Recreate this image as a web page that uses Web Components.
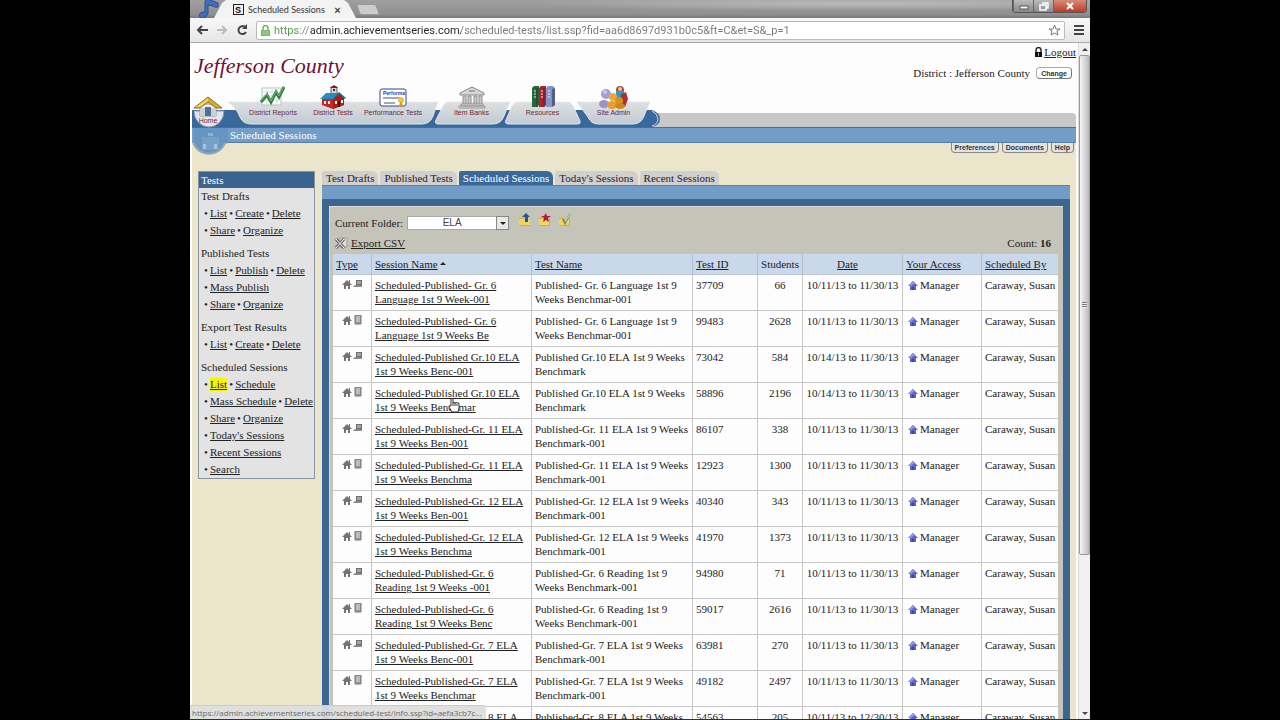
<!DOCTYPE html>
<html lang="en">
<head>
<meta charset="utf-8">
<title>Scheduled Sessions</title>
<style>
html,body{margin:0;height:100%;background:#000;overflow:hidden}
body{font:11px/14px "Liberation Serif",serif;color:#222}
</style>
</head>
<body>
<browser-window>
  <browser-tabs slot="tabs" label="Scheduled Sessions"></browser-tabs>
  <browser-toolbar slot="toolbar"></browser-toolbar>
  <site-header></site-header>
  <main-nav label="Scheduled Sessions"></main-nav>
  <page-body>
    <side-menu slot="side" label="Tests">
      <menu-group label="Test Drafts" items="List,Create,Delete|Share,Organize"></menu-group>
      <menu-group label="Published Tests" items="List,Publish,Delete|Mass Publish|Share,Organize"></menu-group>
      <menu-group label="Export Test Results" items="List,Create,Delete"></menu-group>
      <menu-group label="Scheduled Sessions" current="List" items="List,Schedule|Mass Schedule,Delete|Share,Organize|Today's Sessions|Recent Sessions|Search"></menu-group>
    </side-menu>
    <section-tabs items="Test Drafts|Published Tests|Scheduled Sessions|Today's Sessions|Recent Sessions" current="Scheduled Sessions"></section-tabs>
    <session-panel>
      <folder-bar></folder-bar>
      <session-table></session-table>
    </session-panel>
  </page-body>
  <status-bubble slot="over">https://admin.achievementseries.com/scheduled-test/info.ssp?id=aefa3cb7c...</status-bubble>
  <mouse-pointer slot="over"></mouse-pointer>
</browser-window>
<script>
const icons = {
  home: [30,22,`<path d="M7 9h16v12H7z" fill="#eef1f4" stroke="#8b95a0"/><path d="M7 13h5v8H7zM18 13h5v8h-5z" fill="#c8d1da"/><path d="M12 12h6v9h-6z" fill="#52708f"/><path d="M15 2 1 13h6l8-6 8 6h6z" fill="#d6ac2c" stroke="#8b7020"/><path d="M15 3 3 12h4l8-6z" fill="#efd469"/>`],
  chart: [26,24,`<path d="M2 3h19v17H2z" fill="#fff" stroke="#b9bfc3"/><path d="M2 7h19M2 11h19M2 15h19M7 3v17M12 3v17M17 3v17" stroke="#d4d9dc"/><path d="m1 17 6-7 4 7 5-10 3 5 5-10" fill="none" stroke="#2e7c3c" stroke-width="3"/><path d="m1 16 6-7 4 7 5-10 3 5 5-10" fill="none" stroke="#79ba7d"/>`],
  school: [26,24,`<path d="M11 2h6v8h-6z" fill="#d9d1cc" stroke="#795c58"/><path d="m10 3 4-3 4 3z" fill="#6d2422"/><path d="M13 4h2v2h-2z" fill="#433"/><path d="M2 13h11l6-5 5 5v7l-11 4-11-4z" fill="#c6241f"/><path d="m13 14 6-5 5 4v7l-11 4z" fill="#a81c1a"/><path d="M0 14 6 8h13l-6 6z" fill="#248fbe"/><path d="m19 7 7 6-1 1-6-5-5 5h-1z" fill="#1b6790"/><path d="M4 16h2v3H4zM8 16h2v3H8zM15 16h2v3h-2zM21 15h2v3h-2z" fill="#fff"/><path d="M18 16h2v6h-2z" fill="#43120e"/>`],
  cert: [28,24,`<rect x="1" y="4" width="26" height="17" rx="2" fill="#fff" stroke="#344780"/><text x="4" y="10" font-family="Liberation Sans" font-size="5" font-weight="bold" fill="#253ba0">Performa</text><path d="M4 13h17" stroke="#3b4fa8"/><path d="M5 18h11" stroke="#555"/><circle cx="22" cy="15" r="3" fill="#e9c832"/><path d="m21 17-1 5 2-1 2 1-1-5z" fill="#d29d21"/>`],
  bank: [28,24,`<path d="M2 8 14 2l12 6v2H2z" fill="#d7d7d7" stroke="#888"/><path d="M5 11h3v8H5zM10 11h3v8h-3zM16 11h3v8h-3zM21 11h3v8h-3z" fill="#c9c9c9" stroke="#909090"/><path d="M3 19h22v2H3zM1 21h26v2H1z" fill="#ddd" stroke="#999"/><path d="M11 6h6" stroke="#777"/>`],
  books: [26,24,`<path d="M2 3 4 1h5v19l-2 2H2z" fill="#216b37"/><path d="m9 3 2-2h5v19l-2 2H9z" fill="#b3202f"/><path d="m16 3 2-2h5l2 2v17l-3 2h-6z" fill="#8793c7"/><path d="m22 4 3-1v17l-3 2z" fill="#536181"/><path d="M4 6h2M4 9h2M4 12h2M11 6h2M11 9h2M11 12h2M18 6h2M18 9h2M18 12h2" stroke="#e7eaed"/><path d="M7 3v19M14 3v19" stroke="#382c30"/>`],
  people: [30,24,`<circle cx="21" cy="5" r="4" fill="#9b5139"/><path d="M17 6h8v9h-8z" fill="#279bca"/><path d="m22 9 5-2 2 7-3 8h-5z" fill="#af3032"/><circle cx="21" cy="4" r="2" fill="#e9c2b2"/><circle cx="7" cy="9" r="5" fill="#a69cd8"/><ellipse cx="5" cy="19" rx="5" ry="4" fill="#9e91c7"/><circle cx="14" cy="12" r="4" fill="#eea93d"/><circle cx="20" cy="16" r="4" fill="#d99122"/><ellipse cx="13" cy="20" rx="5" ry="4" fill="#e5a12b"/><ellipse cx="21" cy="21" rx="5" ry="3" fill="#cc861c"/><circle cx="6" cy="7" r="2" fill="#ccc5ef"/>`],
  lock: [9,11,`<path d="M2 5V3a2 2 0 0 1 5 0v2" fill="none" stroke="#222" stroke-width="1.4"/><path d="M1 5h7v5H1z" fill="#111"/><path d="M4 6h1v3H4z" fill="#aaa"/>`],
  house: [10,10,`<path d="M5 1 0 6h2v4h2V7h2v3h2V6h2L8 4V1H7v2z" fill="#737373"/>`],
  laptop: [10,10,`<path d="M3 1h6v5H3z" fill="#6d6d6d"/><path d="M4 2h4v3H4z" fill="#a5a5a5"/><path d="M2 6h7v2H0z" fill="#888"/>`],
  sheet: [10,10,`<path d="M2 0h6v9H2z" fill="#999" stroke="#777"/><path d="M3 2h4M3 4h4M3 6h4" stroke="#ddd"/>`],
  bluehouse: [10,10,`<path d="M5 0 0 5h2v4h6V5h2z" fill="#5d62c6"/><path d="M5 0 0 5h3l4-3z" fill="#8e96df"/><path d="M4 6h2v3H4z" fill="#4046a0"/>`],
  up: [14,14,`<path d="M1 5h4l1 1h6v7H1z" fill="#d9ae2a"/><path d="M1 6h11v6H1z" fill="#f3d25e"/><path d="M8 0 4 4h3v5h3V4h2z" fill="#235b86"/>`],
  star: [14,14,`<path d="M1 5h4l1 1h6v7H1z" fill="#d9ae2a"/><path d="M1 6h10v6H1z" fill="#f6d563"/><path d="m8 0 1 3h4l-3 2 1 4-3-2-3 2 1-4-3-2h3z" fill="#b01e3d"/>`],
  edit: [14,14,`<path d="M1 5h4l1 1h6v7H1z" fill="#d9ae2a"/><path d="M1 6h10v6H1z" fill="#f2d35c"/><path d="m5 6 2 4 5-9" fill="none" stroke="#719058" stroke-width="2"/><path d="m7 9 5-8" stroke="#d3dce0"/>`],
  excel: [13,12,`<path d="M4 1h8v9H5z" fill="#ddd" stroke="#999"/><path d="m1 2 8 9M9 2l-8 9" stroke="#666" stroke-width="3"/><path d="m1 2 8 9M9 2l-8 9" stroke="#fff"/>`],
  note: [24,18,`<path d="m9 1 3-2 10 4v4q-3 1-5-1l-5-1v9q-2 4-6 4c-4 0-4-6 2-6h1z" fill="#436dbc" stroke="#2b4f91"/>`],
  page: [11,11,`<path d="M0 0h11v11H0z" fill="#f6eaea" stroke="#222" stroke-width="2"/><text x="2" y="9" font-family="Liberation Sans" font-size="9" font-weight="bold" fill="#111">S</text>`],
  back: [12,10,`<path d="M6 1 2 5l4 4M2 5h10" fill="none" stroke="#444" stroke-width="2"/>`],
  forward: [12,10,`<path d="m6 1 4 4-4 4M10 5H1" fill="none" stroke="#bbb" stroke-width="2"/>`],
  reload: [12,12,`<path d="M9 3a4 4 0 1 0 1 5" fill="none" stroke="#444" stroke-width="2"/><path d="M11 0v5H6z" fill="#444"/>`],
  secure: [9,11,`<path d="M2 5V3a2 2 0 0 1 5 0v2" fill="none" stroke="#75a960" stroke-width="1.4"/><path d="M0 5h9v6H0z" fill="#7db967"/><path d="M1 7h7M1 9h7" stroke="#a8d492"/>`],
  favorite: [13,12,`<path d="m6.500 1 1.500 4h4L9 7l1 4-3.500-2L3 11l1-4-3-2h4z" fill="#fff" stroke="#777"/>`],
  menu: [10,10,`<path d="M0 1h10M0 5h10M0 9h10" stroke="#444" stroke-width="2"/>`],
};
function define(tag, css, html) {
  customElements.define(tag, class extends HTMLElement {
    constructor() { super(); this.attachShadow({mode: 'open'}); }
    connectedCallback() {
      const body = typeof html === 'function' ? html(this) : html;
      this.shadowRoot.innerHTML = `<style>*{box-sizing:border-box}a{color:inherit}:host{display:block}button{font:bold 7px/9px "Liberation Sans",sans-serif;color:#333;padding:0;margin:0}${css}</style>${body}`;
    }
  });
}
const icon = n => `<ui-icon name="${n}"></ui-icon>`;

define('ui-icon', ':host{display:inline-block;flex:none}svg{display:block;overflow:hidden}', el => {
  const [w,h,d] = icons[el.getAttribute('name')];
  return `<svg width="${w}" height="${h}" viewBox="0 0 ${w} ${h}" aria-hidden="true">${d}</svg>`;
});

define('browser-window', `
:host{position:relative;margin:0 190px;height:100vh;display:flex;flex-direction:column;background:#fdfdfd;border-bottom:1px solid #332f33;box-sizing:border-box;overflow:hidden}
.view{flex:1;min-height:0;display:flex}
.page{flex:1;min-width:0;padding:0 2px;overflow:hidden;display:flex;flex-direction:column}
.bar{width:12px;display:flex;flex-direction:column;align-items:center;background:#f0f0f0;border-left:1px solid #ddd}
.arrow{height:12px;display:flex;align-items:center}
.up{border:3px solid transparent;border-top:0;border-bottom:3px solid #444}
.down{border:3px solid transparent;border-bottom:0;border-top:3px solid #444}
.thumb{flex:500;align-self:stretch;border:1px solid #999;border-radius:2px;background:linear-gradient(90deg,#f5f5f5,#d2d2d5 60%,#bbb);display:flex;align-items:center;justify-content:center}
.grip{width:5px;height:6px;background:repeating-linear-gradient(#777 0 1px,#eee 1px 2px)}
.rest{flex:152}`,
`<slot name="tabs"></slot><slot name="toolbar"></slot>
<div class="view"><div class="page"><slot></slot></div>
<div class="bar"><div class="arrow"><i class="up"></i></div><div class="thumb"><i class="grip"></i></div><div class="rest"></div><div class="arrow"><i class="down"></i></div></div></div>
<slot name="over"></slot>`);

define('browser-tabs', `
:host{height:18px;display:flex;background:radial-gradient(ellipse at 75% 20%,#bbb,transparent 35%),linear-gradient(#a0a0a0,#8f8f8f 80%,#777);overflow:hidden}
.note{padding:0 0 0 6px;width:34px}
.tab{width:142px;height:18px;padding:1px 10px 0 19px;display:flex;align-items:center;gap:4px;font:9px/16px "Lato",sans-serif;color:#333;background:#f3f3f3;clip-path:polygon(0 100%,8px 3px,12px 0,130px 0,134px 3px,142px 100%);margin-left:-10px}
.tab span{flex:1;white-space:nowrap}
.tab button{width:18px;border:0;background:none;font:bold 11px/14px "Liberation Sans",sans-serif;color:#444;padding:0}
.new{width:20px;height:11px;margin:4px 0 0 2px;border:1px solid #999;border-radius:2px;background:#ccc;transform:skewX(20deg)}
.controls{margin-left:auto;margin-right:3px;display:flex;height:13px;border:1px solid #555;border-top:0;border-radius:0 0 4px 4px;overflow:hidden}
.controls button{border:0;border-left:1px solid #666;background:linear-gradient(#bbb,#888);width:20px;display:grid;place-items:center}
.controls .x{width:33px;background:linear-gradient(#d58b7b,#bd3a27)}`,
el => `<div class="note">${icon('note')}</div>
<div class="tab">${icon('page')}<span>${el.getAttribute('label')}</span><button aria-label="Close tab">×</button></div>
<button class="new" aria-label="New tab"></button>
<div class="controls"><button aria-label="Minimize"><svg width="10" height="8"><path d="M1 4h8v3H1z" fill="#fff" stroke="#555"/></svg></button>
<button aria-label="Restore"><svg width="10" height="9"><path d="M3 1h6v5H7M1 3h6v5H1z" fill="none" stroke="#fff" stroke-width="1.500"/></svg></button>
<button class="x" aria-label="Close"><svg width="10" height="8"><path d="m2 1 6 6M8 1 2 7" stroke="#fff" stroke-width="2"/></svg></button></div>`);

define('browser-toolbar', `
:host{height:25px;display:flex;align-items:center;padding:0 6px 0 6px;background:linear-gradient(#f8f8f8,#e6e6e6);border-bottom:1px solid #aaa;box-sizing:border-box}
.nav{border:0;background:none;display:flex;width:20px}
.box{flex:1;height:19px;display:flex;align-items:center;gap:4px;border:1px solid #bbb;border-radius:2px;background:#fff;padding:0 3px 0 4px;margin-right:9px}
input{flex:1;min-width:0;border:0;outline:0;padding:0;height:17px;font:11px/17px "Roboto",sans-serif;color:#777;
background:linear-gradient(90deg,#4f9a45 0 25px,#888 25px 36px,#222 36px 187px,#777 187px);-webkit-background-clip:text;background-clip:text;-webkit-text-fill-color:transparent}
.menu{border:0;background:none;display:flex}`,
`<button class="nav" aria-label="Back">${icon('back')}</button><button class="nav" aria-label="Forward">${icon('forward')}</button><button class="nav" aria-label="Reload">${icon('reload')}</button>
<div class="box">${icon('secure')}<input aria-label="Address" value="https://admin.achievementseries.com/scheduled-tests/list.ssp?fid=aa6d8697d931b0c5&amp;ft=C&amp;et=S&amp;_p=1">${icon('favorite')}</div>
<button class="menu" aria-label="Menu">${icon('menu')}</button>`);

define('site-header', `
:host{display:flex;justify-content:space-between;height:42px;flex:none}
h1{margin:10px 0 0 2px;font:italic 22px/26px "Liberation Serif",serif;color:#6e1238}
.right{display:flex;flex-direction:column;align-items:flex-end}
.out{display:flex;align-items:center;gap:1px;height:18px}
.district{display:flex;align-items:center;gap:6px;height:24px;padding-right:4px}
button{height:12px;width:36px;border:1px solid #888;border-color:#aaa #777 #777 #aaa;border-radius:4px;background:#fff}`,
`<h1>Jefferson County</h1><div class="right"><div class="out">${icon('lock')}<a href="#">Logout</a></div><div class="district">District : Jefferson County<button>Change</button></div></div>`);

define('main-nav', `
:host{display:grid;grid-template-rows:58px;height:58px;flex:none;position:relative}
.bars,.shape,nav{grid-area:1/1}
.bars{display:flex;flex-direction:column;justify-content:flex-end}
.gray{height:14px;background:#c8c8c8;border-radius:0 4px 0 0;margin-left:8px}
.title{height:16px;background:#719dc7;border-top:1px solid #46709a;border-bottom:1px solid #597da0;color:#fff;line-height:15px;padding-left:38px}
.shape{overflow:visible;display:block;position:relative}
nav{display:flex;position:relative;align-items:flex-start}
a{display:flex;flex-direction:column;align-items:center;height:32px;justify-content:space-between;font:7px/8px "Liberation Sans",sans-serif;color:#6c1f3d;text-decoration:none;width:60px;white-space:nowrap}
a.home{width:32px;height:40px;justify-content:flex-end;margin-right:19px}
a.wide{width:71px}
a.gap{margin-left:13px}`,
el => `<div class="bars"><div class="gray"></div><div class="title">${el.getAttribute('label')}</div></div>
<svg class="shape" width="480" height="72" viewBox="2 0 480 72" aria-hidden="true">
<defs><linearGradient id="g" x2="0" y2="1"><stop offset="0" stop-color="#dcdfe0"/><stop offset=".4" stop-color="#d3d8db"/><stop offset="1" stop-color="#c0cad3"/></linearGradient></defs>
<path d="M2 25h460q8 3 8 9t-8 8H2z" fill="#39689a"/><path d="M462 26q6 3 6 8t-6 7" fill="none" stroke="#cbd9e8"/>
<g fill="url(#g)" stroke="#e4e8ea">
<path d="M38 17h210q-2 5-5 14-3 8-11 8H61q-8 0-11-7-4-10-12-15z"/>
<path d="M259 17h61q-3 6-6 14-3 8-11 8h-55q-4 0-2-4l7-14q2-4 6-4z"/>
<path d="M328 17h49q4 0 6 4l7 15q1 3-2 3h-69q-5 0-3-4l6-14q2-4 6-4z"/>
<path d="M387 17h73q-3 6-6 14-3 8-11 8h-35q-7 0-10-7z"/></g>
<path d="M4 43h34v15l-3 1a17 17 0 0 1-31-1z" fill="#6795c1"/><path d="M3 57a17 17 0 0 0 32 1" fill="none" stroke="#93a6b6" stroke-width="2"/>
<path d="M12 52h17v13H12z" fill="#82a9cd" opacity=".6"/><path d="M13 59h3v5h-3zM24 59h3v5h-3z" fill="#a7c2dc"/><path d="M18 48h5v3h-5z" fill="#8fb3d5"/>
<path d="M4 26a15 16 0 0 0 30 0z" fill="#e3e6e9" stroke="#879eb6"/>
</svg>
<nav><a class="home" href="#">${icon('home')}Home</a><a href="#">${icon('chart')}District Reports</a><a href="#">${icon('school')}District Tests</a><a href="#">${icon('cert')}Performance Tests</a>
<a class="wide gap" href="#">${icon('bank')}Item Banks</a><a class="wide" href="#">${icon('books')}Resources</a><a class="wide" href="#">${icon('people')}Site Admin</a></nav>`);

define('page-body', `
:host{flex:1;min-height:0;background:#ebe6cb;overflow:hidden}
.buttons{display:flex;justify-content:flex-end;gap:3px;padding-right:2px;height:28px}
.buttons button{height:10px;border:1px solid #888;border-top:0;border-radius:0 0 4px 4px;background:#e3e3e0;padding:0 3px}
.cols{display:flex;align-items:flex-start;gap:7px;padding:0 6px}
.main{flex:1;min-width:0}`,
`<div class="buttons"><button>Preferences</button><button>Documents</button><button>Help</button></div>
<div class="cols"><slot name="side"></slot><div class="main"><slot></slot></div></div>`);

define('side-menu', `
:host{width:117px;flex:none;box-sizing:border-box;border:1px solid #8794a4;background:#e3e3e4}
h2{margin:0;padding-left:2px;font:11px/16px "Liberation Serif",serif;color:#fff;background:#3a6390}`,
el => `<h2>${el.getAttribute('label')}</h2><slot></slot>`);

define('menu-group', `
:host{line-height:17px;padding:0 0 6px 2px;white-space:nowrap}
:host(:last-child){padding-bottom:0}
.row{display:flex;gap:2px;padding-left:3px}
.row span{width:4px;text-align:center}
.on{background:#f8f500;line-height:13px;margin:2px 0}`,
el => `<div>${el.getAttribute('label')}</div>` + el.getAttribute('items').split('|').map(r =>
 `<div class="row">${r.split(',').map(t => `<span>•</span><a href="#"${t === el.getAttribute('current') ? ' class="on"' : ''}>${t}</a>`).join('')}</div>`).join(''));

define('section-tabs', `
:host{display:flex;gap:2px}
a{height:14px;line-height:14px;padding:0 4px;background:#d2d0cf;text-decoration:none;border-radius:2px 6px 0 0;white-space:nowrap}
a.on{background:#39689a;color:#fff}`,
el => el.getAttribute('items').split('|').map(t => `<a href="#"${t === el.getAttribute('current') ? ' class="on"' : ''}>${t}</a>`).join(''));

define('session-panel', `
.bar{height:14px;background:#719dc7;border-top:1px solid #5484b0}
.frame{border:7px solid #3a668f;background:#c5c4b9}
.in{border:1px solid #dcdcd8;border-width:1px 0 0 1px;padding:7px 5px 6px 3px}`,
`<div class="bar"></div><div class="frame"><div class="in"><slot></slot></div></div>`);

define('folder-bar', `
.row{display:flex;align-items:center;padding-left:2px}
.folder{height:18px}
.select{display:flex;position:relative;margin:0 9px 0 4px}
select{appearance:none;width:102px;height:14px;border:1px solid #aaa;border-radius:0;background:#fff;font:10px/12px "Liberation Sans",sans-serif;color:#444;padding:0 12px 0 0;text-align:center;text-align-last:center}
.drop{position:absolute;right:0;top:0;width:13px;height:14px;border:1px solid #888;background:#e8e8e8;display:grid;place-items:center;pointer-events:none}
.drop i{border:3px solid transparent;border-bottom:0;border-top:3px solid #222}
.act{border:0;background:none;width:20px;display:flex;margin-bottom:6px}
.csv{height:22px;gap:3px;padding-right:7px}
.count{margin-left:auto}`,
`<div class="row folder"><label for="f">Current Folder:</label><span class="select"><select id="f"><option>ELA</option></select><span class="drop"><i></i></span></span>
<button class="act" aria-label="Parent folder">${icon('up')}</button><button class="act" aria-label="New folder">${icon('star')}</button><button class="act" aria-label="Edit folder">${icon('edit')}</button></div>
<div class="row csv">${icon('excel')}<a href="#">Export CSV</a><span class="count">Count: <b>16</b></span></div>`);

const A = '10/11/13 to 11/30/13', B = '10/14/13 to 11/30/13';
const sessions = [
['laptop','Scheduled-Published- Gr. 6\nLanguage 1st 9 Week-001','Published- Gr. 6 Language 1st 9\nWeeks Benchmar-001',37709,66,A],
['sheet','Scheduled-Published- Gr. 6\nLanguage 1st 9 Weeks Be','Published- Gr. 6 Language 1st 9\nWeeks Benchmar-001',99483,2628,A],
['laptop','Scheduled-Published Gr.10 ELA\n1st 9 Weeks Benc-001','Published Gr.10 ELA 1st 9 Weeks\nBenchmark',73042,584,B],
['sheet','Scheduled-Published Gr.10 ELA\n1st 9 Weeks Benchmar','Published Gr.10 ELA 1st 9 Weeks\nBenchmark',58896,2196,B],
['laptop','Scheduled-Published-Gr. 11 ELA\n1st 9 Weeks Ben-001','Published-Gr. 11 ELA 1st 9 Weeks\nBenchmark-001',86107,338,A],
['sheet','Scheduled-Published-Gr. 11 ELA\n1st 9 Weeks Benchma','Published-Gr. 11 ELA 1st 9 Weeks\nBenchmark-001',12923,1300,A],
['laptop','Scheduled-Published-Gr. 12 ELA\n1st 9 Weeks Ben-001','Published-Gr. 12 ELA 1st 9 Weeks\nBenchmark-001',40340,343,A],
['sheet','Scheduled-Published-Gr. 12 ELA\n1st 9 Weeks Benchma','Published-Gr. 12 ELA 1st 9 Weeks\nBenchmark-001',41970,1373,A],
['laptop','Scheduled-Published-Gr. 6\nReading 1st 9 Weeks -001','Published-Gr. 6 Reading 1st 9\nWeeks Benchmark-001',94980,71,A],
['sheet','Scheduled-Published-Gr. 6\nReading 1st 9 Weeks Benc','Published-Gr. 6 Reading 1st 9\nWeeks Benchmark-001',59017,2616,A],
['laptop','Scheduled-Published-Gr. 7 ELA\n1st 9 Weeks Benc-001','Published-Gr. 7 ELA 1st 9 Weeks\nBenchmark-001',63981,270,A],
['sheet','Scheduled-Published-Gr. 7 ELA\n1st 9 Weeks Benchmar','Published-Gr. 7 ELA 1st 9 Weeks\nBenchmark-001',49182,2497,A],
['laptop','Scheduled-Published-Gr. 8 ELA','Published-Gr. 8 ELA 1st 9 Weeks',54563,205,'10/11/13 to 12/30/13'],
];
define('session-table', `
table{width:100%;table-layout:fixed;border-collapse:separate;border-spacing:0;background:#fdfdfd}
th{height:21px;padding:0 3px;background:#cad8eb;font-weight:normal;text-align:left;border-right:1px solid #b5c0cc;border-bottom:1px solid #bcc6d0;white-space:nowrap}
td{height:36px;padding:3px 3px 4px;vertical-align:top;border-right:1px solid #c8c8c8;border-bottom:1px solid #c8c8c8;white-space:pre}
th:last-child,td:last-child{border-right:0}
.c{text-align:center;padding-left:0;padding-right:0}
th.d{padding-right:10px}
.icons{display:flex;gap:1px;padding:1px 0 0 6px}
.who{display:flex;align-items:center;gap:2px;padding-left:2px}
.who ui-icon{margin-top:2px}
.sort{display:inline-block;border:3px solid transparent;border-top:0;border-bottom:3px solid #222;margin:0 0 3px 2px}
.t{width:39px}.n{width:160px}.i{width:65px}.s{width:45px}.d{width:100px}.a{width:79px}.b{width:76px}`,
() => `<table><thead><tr><th class="t"><a href="#">Type</a></th><th class="n"><a href="#">Session Name</a><i class="sort"></i></th><th><a href="#">Test Name</a></th><th class="i"><a href="#">Test ID</a></th><th class="s c">Students</th><th class="d c"><a href="#">Date</a></th><th class="a"><a href="#">Your Access</a></th><th class="b"><a href="#">Scheduled By</a></th></tr></thead><tbody>` +
sessions.map(([k,n,t,id,s,d]) => `<tr><td><span class="icons">${icon('house')}${icon(k)}</span></td><td><a href="#">${n}</a></td><td>${t}</td><td>${id}</td><td class="c">${s}</td><td class="c">${d}</td><td><span class="who">${icon('bluehouse')}<span>Manager</span></span></td><td>Caraway, Susan</td></tr>`).join('') + `</tbody></table>`);

define('status-bubble', `
:host{position:absolute;left:0;bottom:0;box-sizing:border-box;height:14px;padding:0 4px 0 2px;background:#dededeee;border-top:1px solid #ccc;border-radius:0 3px 0 0;font:8px/13px "Open Sans",sans-serif;color:#666;white-space:nowrap}`, `<slot></slot>`);
define('mouse-pointer', `:host{position:absolute;left:258px;top:397px;pointer-events:none}svg{display:block}`,
`<svg width="12" height="16" viewBox="0 0 12 16" aria-hidden="true"><path d="M3 9V2q1-2 2 0v4q1-1 2 0 1-1 2 0 2-1 2 1v4l-1 4H4L1 10q-1-2 2-1z" fill="#fff" stroke="#333"/><path d="M5 6v3M7 6v3M9 7v2" stroke="#333"/></svg>`);
</script>
</body>
</html>
